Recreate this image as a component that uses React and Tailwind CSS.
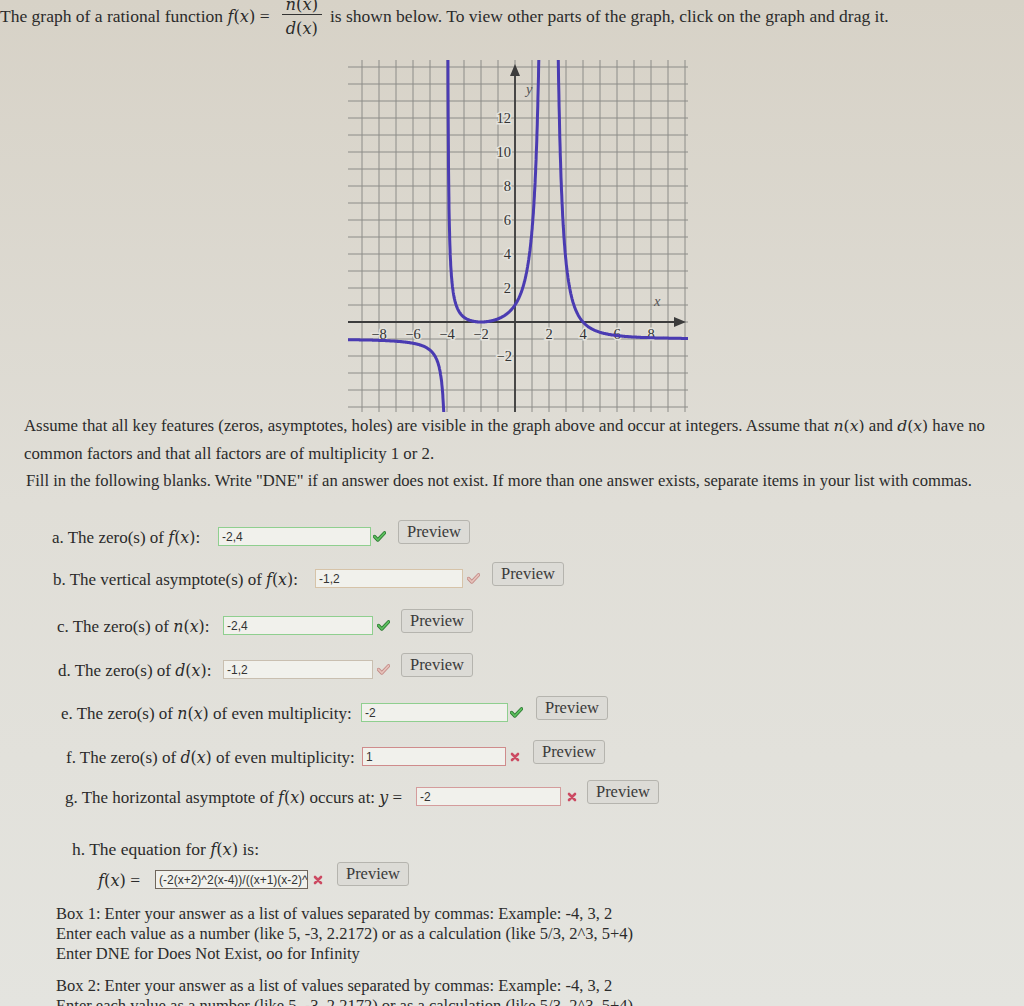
import React from "react";

const W = 340, H = 352, OX = 167, OY = 262, U = 17;
const fn = (x) => (-((x + 2) ** 2) * (x - 4)) / ((x + 4) * (x - 2) ** 2);

function branch(a, b) {
  const pts = [];
  const n = 600;
  for (let i = 0; i <= n; i++) {
    const x = a + ((b - a) * i) / n;
    const y = fn(x);
    if (y > 17 || y < -7) continue;
    pts.push((OX + U * x).toFixed(1) + " " + (OY - U * y).toFixed(1));
  }
  return "M" + pts.join(" L");
}

function Graph() {
  const vx = [];
  for (let k = -9; k <= 10; k++) vx.push(OX + U * k);
  const hy = [];
  for (let k = -5; k <= 15; k++) hy.push(OY - U * k);
  const xl = [-8, -6, -4, -2, 2, 4, 6, 8];
  const yl = [2, 4, 6, 8, 10, 12];
  const lbl = { fontFamily: "Liberation Serif, serif", fontSize: 14.5, fill: "#333" };
  const halo = { stroke: "#e3e2dc", strokeWidth: 3, paintOrder: "stroke" };
  return (
    <svg width={W} height={H} viewBox={`0 0 ${W} ${H}`} className="block">
      {vx.map((x) => (
        <line key={"v" + x} x1={x} y1={0} x2={x} y2={H} stroke="#8c8c88" strokeWidth="1" />
      ))}
      {hy.map((y) => (
        <line key={"h" + y} x1={0} y1={y} x2={W} y2={y} stroke="#8c8c88" strokeWidth="1" />
      ))}
      <line x1={0} y1={OY} x2={W - 8} y2={OY} stroke="#3c3c3c" strokeWidth="1.8" />
      <polygon points={`${W - 2},${OY} ${W - 14},${OY - 5} ${W - 14},${OY + 5}`} fill="#3c3c3c" />
      <line x1={OX} y1={H} x2={OX} y2={12} stroke="#3c3c3c" strokeWidth="1.8" />
      <polygon points={`${OX},4 ${OX - 5},16 ${OX + 5},16`} fill="#3c3c3c" />
      {xl.map((k) => (
        <text key={"xl" + k} x={OX + U * k} y={OY + 17} textAnchor="middle" {...lbl} {...halo}>
          {k < 0 ? "\u2212" + -k : k}
        </text>
      ))}
      {yl.map((k) => (
        <text key={"yl" + k} x={OX - 4} y={OY - U * k + 5} textAnchor="end" {...lbl} {...halo}>
          {k}
        </text>
      ))}
      <text x={OX - 3} y={OY + U * 2 + 5} textAnchor="end" {...lbl} {...halo}>
        {"\u2212"}2
      </text>
      <text x={306} y={246} {...lbl} fontStyle="italic" fill="#555">x</text>
      <text x={178} y={34} {...lbl} fontStyle="italic" fill="#555">y</text>
      <path d={branch(-10.5, -4.0005)} fill="none" stroke="#4a3bb2" strokeWidth="3" />
      <path d={branch(-3.9995, 1.9995)} fill="none" stroke="#4a3bb2" strokeWidth="3" />
      <path d={branch(2.0005, 10.5)} fill="none" stroke="#4a3bb2" strokeWidth="3" />
    </svg>
  );
}

const F = ({ n = "f" }) => (
  <span className="whitespace-nowrap font-['DejaVu_Serif',serif] text-[0.93em]">
    <i>{n}</i>(<i>x</i>)
  </span>
);

function Check({ pale }) {
  return (
    <svg width="13" height="11" viewBox="0 0 13 11" className="block">
      <path
        d="M1.5 5.5 L4.8 9 L11.5 1.8"
        fill="none"
        stroke={pale ? "#c48c88" : "#2f7a34"}
        strokeWidth="3.4"
        strokeLinecap="round"
        strokeLinejoin="round"
      />
      <path
        d="M1.5 5.5 L4.8 9 L11.5 1.8"
        fill="none"
        stroke={pale ? "#e6c2ba" : "#5cc05e"}
        strokeWidth="1.8"
        strokeLinecap="round"
        strokeLinejoin="round"
      />
    </svg>
  );
}

function Cross() {
  return (
    <svg width="10" height="10" viewBox="0 0 10 10" className="block">
      <path d="M2 2 L8 8 M8 2 L2 8" stroke="#cc4a62" strokeWidth="2.6" strokeLinecap="round" />
    </svg>
  );
}

function Preview({ cls = "" }) {
  return (
    <div
      className={
        "h-[24px] w-[72px] shrink-0 flex items-center justify-center rounded-[3px] border border-[#b5b4ae] bg-[#dcdbd6] text-[16.5px] text-[#3a3a3a] " +
        cls
      }
    >
      Preview
    </div>
  );
}

function Input({ value, w, border }) {
  return (
    <div
      className={
        "h-[19px] shrink-0 border bg-[#f1f1ec] flex items-center pl-[3px] text-[12px] text-[#333] overflow-hidden whitespace-nowrap font-['Liberation_Sans',sans-serif] " +
        w +
        " " +
        border
      }
    >
      {value}
    </div>
  );
}

function Row({ cls, labelW, label, value, w, border, mark, gapMark, gapBtn }) {
  return (
    <div className={"flex items-start h-[26px] " + cls}>
      <div className="flex items-end mt-[7px]">
        <span className={"text-[17px] leading-[16px] whitespace-nowrap shrink-0 " + labelW}>{label}</span>
        <Input value={value} w={w} border={border} />
        <div className={"mb-[4px] shrink-0 " + gapMark}>{mark}</div>
      </div>
      <Preview cls={gapBtn} />
    </div>
  );
}

export default function App() {
  return (
    <div className="relative w-[1024px] h-[1006px] overflow-hidden bg-linear-to-b from-[#d7d2c7] via-[#e0ded7] to-[#e4e4df] text-[#2b2b2b] font-['Liberation_Serif',serif]">
      <div className="flex items-center h-[32px] text-[17.5px] whitespace-nowrap">
        <span>
          The graph of a rational function <F /> =
        </span>
        <span className="inline-flex flex-col items-center ml-[12px] mr-[8px] leading-[17px]">
          <span className="px-[4px] pb-[1px]">
            <F n="n" />
          </span>
          <span className="border-t border-[#333] px-[4px] pt-[5px]">
            <F n="d" />
          </span>
        </span>
        <span>is shown below. To view other parts of the graph, click on the graph and drag it.</span>
      </div>

      <div className="ml-[348px] mt-[28px]">
        <Graph />
      </div>

      <p className="mt-[0px] pl-[24px] text-[16.8px] leading-[27px]">
        Assume that all key features (zeros, asymptotes, holes) are visible in the graph above and occur at integers. Assume that{" "}
        <F n="n" /> and <F n="d" /> have no
        <br />
        common factors and that all factors are of multiplicity 1 or 2.
      </p>
      <p className="pl-[26px] mt-[0px] text-[16.6px] leading-[27px]">
        Fill in the following blanks. Write "DNE" if an answer does not exist. If more than one answer exists, separate items in your list with commas.
      </p>

      <div className="flex flex-col">
        <Row
          cls="mt-[26px] pl-[52px]"
          labelW="w-[166px]"
          label={<>a. The zero(s) of <F />:</>}
          value="-2,4"
          w="w-[153px]"
          border="border-[#8fcf8f]"
          mark={<Check />}
          gapMark="ml-[2px]"
          gapBtn="ml-[12px]"
        />
        <Row
          cls="mt-[16px] pl-[53px]"
          labelW="w-[262px]"
          label={<>b. The vertical asymptote(s) of <F />:</>}
          value="-1,2"
          w="w-[148px]"
          border="border-[#d6c3a8]"
          mark={<Check pale />}
          gapMark="ml-[4px]"
          gapBtn="ml-[12px]"
        />
        <Row
          cls="mt-[21px] pl-[57px]"
          labelW="w-[166px]"
          label={<>c. The zero(s) of <F n="n" />:</>}
          value="-2,4"
          w="w-[150px]"
          border="border-[#8fcf8f]"
          mark={<Check />}
          gapMark="ml-[4px]"
          gapBtn="ml-[11px]"
        />
        <Row
          cls="mt-[18px] pl-[58px]"
          labelW="w-[165px]"
          label={<>d. The zero(s) of <F n="d" />:</>}
          value="-1,2"
          w="w-[150px]"
          border="border-[#c9bfb0]"
          mark={<Check pale />}
          gapMark="ml-[4px]"
          gapBtn="ml-[11px]"
        />
        <Row
          cls="mt-[17px] pl-[61px]"
          labelW="w-[300px]"
          label={<>e. The zero(s) of <F n="n" /> of even multiplicity:</>}
          value="-2"
          w="w-[147px]"
          border="border-[#8fcf8f]"
          mark={<Check />}
          gapMark="ml-[2px]"
          gapBtn="ml-[13px]"
        />
        <Row
          cls="mt-[18px] pl-[66px]"
          labelW="w-[296px]"
          label={<>f. The zero(s) of <F n="d" /> of even multiplicity:</>}
          value="1"
          w="w-[144px]"
          border="border-[#cf8c8c]"
          mark={<Cross />}
          gapMark="ml-[4px]"
          gapBtn="ml-[13px]"
        />
        <Row
          cls="mt-[14px] pl-[65px]"
          labelW="w-[351px]"
          label={
            <>
              g. The horizontal asymptote of <F /> occurs at: <i className="font-['DejaVu_Serif',serif] text-[0.93em]">y</i> =
            </>
          }
          value="-2"
          w="w-[145px]"
          border="border-[#d49c9c]"
          mark={<Cross />}
          gapMark="ml-[6px]"
          gapBtn="ml-[10px]"
        />
        <div className="mt-[33px] pl-[72px] text-[17.5px] leading-[20px]">
          h. The equation for <F /> is:
        </div>
        <div className="mt-[2px] pl-[98px] flex items-start h-[29px]">
          <div className="flex items-end mt-[8px]">
            <span className="w-[57px] shrink-0 text-[17.5px] leading-[16px] whitespace-nowrap">
              <F /> =
            </span>
            <Input value="(-2(x+2)^2(x-4))/((x+1)(x-2)^2)" w="w-[153px]" border="border-[#6f665c]" />
            <div className="mb-[4px] ml-[5px]">
              <Cross />
            </div>
          </div>
          <Preview cls="ml-[14px]" />
        </div>
      </div>

      <div className="mt-[13px] pl-[56px] text-[16.5px] leading-[20px]">
        <div>Box 1: Enter your answer as a list of values separated by commas: Example: -4, 3, 2</div>
        <div>Enter each value as a number (like 5, -3, 2.2172) or as a calculation (like 5/3, 2^3, 5+4)</div>
        <div>Enter DNE for Does Not Exist, oo for Infinity</div>
        <div className="mt-[12px]">Box 2: Enter your answer as a list of values separated by commas: Example: -4, 3, 2</div>
        <div>Enter each value as a number (like 5, -3, 2.2172) or as a calculation (like 5/3, 2^3, 5+4)</div>
      </div>
    </div>
  );
}
